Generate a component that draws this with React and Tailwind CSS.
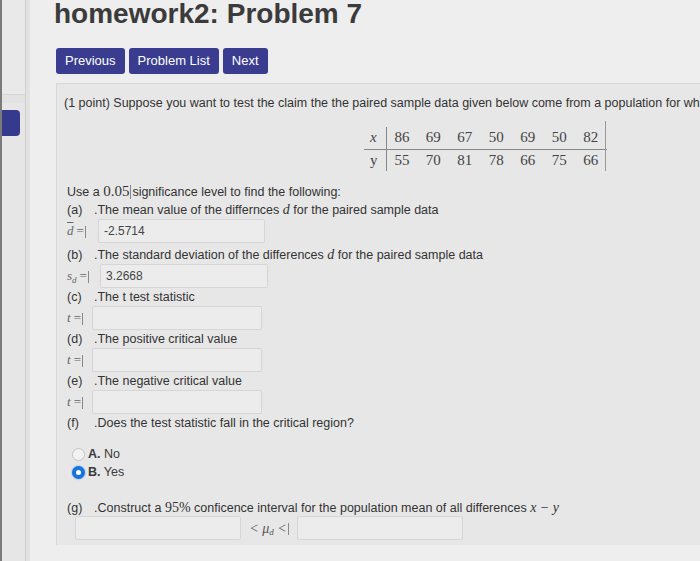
const XS = [86, 69, 67, 50, 69, 50, 82];
const YS = [55, 70, 81, 78, 66, 75, 66];

const serif = { fontFamily: '"Liberation Serif", serif' };

function Field({ className = "", value }) {
  return (
    <div className={`h-[24px] rounded-[2px] border border-[#d6d6d6] bg-[#ececec] px-[5px] text-[12px] leading-[22px] text-[#444] ${className}`}>
      {value}
    </div>
  );
}

function Part({ tag, children, className = "" }) {
  return (
    <div className={`flex items-baseline whitespace-nowrap text-[12.5px] leading-[18px] text-[#333] ${className}`}>
      <span className="w-[27px]">({tag})</span>
      <span>.{children}</span>
    </div>
  );
}

function Eq({ label, value, w, lw, top = "" }) {
  return (
    <div className={`flex items-center ${top}`}>
      <span className={`${lw} whitespace-nowrap text-[13px] italic text-[#666]`} style={serif}>
        {label}
        <span className="ml-[3px] not-italic">=</span>
        <span className="ml-[1px] inline-block h-[12px] w-px bg-[#888] align-middle" />
      </span>
      <Field className={w} value={value} />
    </div>
  );
}

function Radio({ on, label, letter }) {
  return (
    <div className="flex h-[16px] items-center gap-[3px] text-[12.5px] text-[#3a3a3a]">
      {on ? (
        <span className="flex h-[13px] w-[13px] items-center justify-center rounded-full bg-[#1a73d9] shadow-[0_0_2px_#5aa0ff]">
          <span className="h-[5px] w-[5px] rounded-full bg-white" />
        </span>
      ) : (
        <span className="h-[13px] w-[13px] rounded-full border border-[#c4c4c4] bg-[#f2f2f2]" />
      )}
      <span>
        <b className="font-bold">{letter}.</b> {label}
      </span>
    </div>
  );
}

export default function App() {
  return (
    <div
      className="flex h-[561px] w-[700px] overflow-hidden bg-[#eeeeee]"
      style={{ fontFamily: '"Liberation Sans", Arial, sans-serif' }}
    >
      {/* sidebar */}
      <div className="flex w-[30px] shrink-0 border-l-[2px] border-[#7a7a7a] bg-[#e2e2e2]">
        <div className="flex w-[24px] flex-col gap-[8px] border-r border-[#d0d0d0]">
          <div className="h-[95px] border-b border-[#d6d6d6] bg-[#e9e9e9]" />
          <div className="flex-1 bg-[#e6e6e6] pt-[7px]">
            <div className="h-[26px] w-[18px] rounded-r-[4px] bg-[#363a8c]" />
          </div>
        </div>
      </div>

      <div className="flex-1 pl-[26px]">
        <h1 className="-ml-[2px] mt-[-3px] whitespace-nowrap text-[28px] font-bold leading-[34px] text-[#3b3b3b]">
          homework2: Problem 7
        </h1>

        <div className="mt-[17px] flex gap-[4px]">
          {["Previous", "Problem List", "Next"].map((b) => (
            <button
              key={b}
              className="h-[26px] rounded-[3px] bg-[#3a3d8f] px-[9px] text-[13px] text-white"
            >
              {b}
            </button>
          ))}
        </div>

        <div className="mt-[9px] h-[462px] border-l border-t border-[#d8d8d8] bg-[#e7e7e7] pl-[7px] pt-[10px]">
          <p className="whitespace-nowrap text-[12.5px] leading-[18px] text-[#333]">
            (1 point) Suppose you want to test the claim the the paired sample data given below come from a population for which the mean difference is
          </p>

          <div className="ml-[300px] mt-[15px] flex">
            <table className="text-[15px] leading-[19px] text-[#444]" style={serif}>
              <tbody>
                <tr className="border-b border-[#888]">
                  <td className="w-[22px] border-r border-[#888] pl-[6px] italic">x</td>
                  {XS.map((n, i) => (
                    <td key={i} className="w-[31.5px] text-center">{n}</td>
                  ))}
                </tr>
                <tr>
                  <td className="border-r border-[#888] pl-[6px]">y</td>
                  {YS.map((n, i) => (
                    <td key={i} className="text-center">{n}</td>
                  ))}
                </tr>
              </tbody>
            </table>
            <div className="-ml-[2px] mt-[-6px] h-[50px] w-px bg-[#999]" />
          </div>

          <div className="ml-[3px] mt-[11px]">
            <div className="flex items-baseline text-[12.5px] leading-[18px] text-[#333]">
              Use a&nbsp;
              <span className="text-[15px]" style={serif}>0.05</span>
              <span className="mx-[1px] inline-block h-[14px] w-px self-center bg-[#888]" />
              significance level to find the following:
            </div>

            <Part tag="a">
              The mean value of the differnces <i style={serif} className="text-[14px]">d</i> for the paired sample data
            </Part>
            <Eq label={<span className="overline">d</span>} value="-2.5714" lw="w-[31px]" w="w-[167px]" />

            <Part tag="b" className="mt-[3px]">
              The standard deviation of the differences <i style={serif} className="text-[14px]">d</i> for the paired sample data
            </Part>
            <Eq label={<>s<sub className="text-[9px]">d</sub></>} value="3.2668" lw="w-[33px]" w="w-[168px]" />

            <Part tag="c">The t test statistic</Part>
            <Eq label="t" lw="w-[25px]" w="w-[170px]" />

            <Part tag="d">The positive critical value</Part>
            <Eq label="t" lw="w-[25px]" w="w-[170px]" />

            <Part tag="e">The negative critical value</Part>
            <Eq label="t" lw="w-[25px]" w="w-[170px]" />

            <Part tag="f">Does the test statistic fall in the critical region?</Part>

            <div className="mt-[14px] flex flex-col gap-[2px] pl-[5px]">
              <Radio letter="A" label="No" />
              <Radio letter="B" label="Yes" on />
            </div>

            <Part tag="g" className="mt-[19px]">
              Construct a <span style={serif} className="text-[14px]">95%</span> conficence interval for the population mean of all differences{" "}
              <i style={serif} className="text-[14px]">x − y</i>
            </Part>
            <div className="-mt-[1px] flex items-center pl-[8px]">
              <Field className="w-[166px]" />
              <span className="w-[56px] text-center text-[14px] italic text-[#555]" style={serif}>
                &lt; μ<sub className="text-[9px]">d</sub> &lt;
                <span className="ml-[1px] inline-block h-[12px] w-px bg-[#888] align-middle" />
              </span>
              <Field className="w-[166px]" />
            </div>
          </div>
        </div>
      </div>
    </div>
  );
}
